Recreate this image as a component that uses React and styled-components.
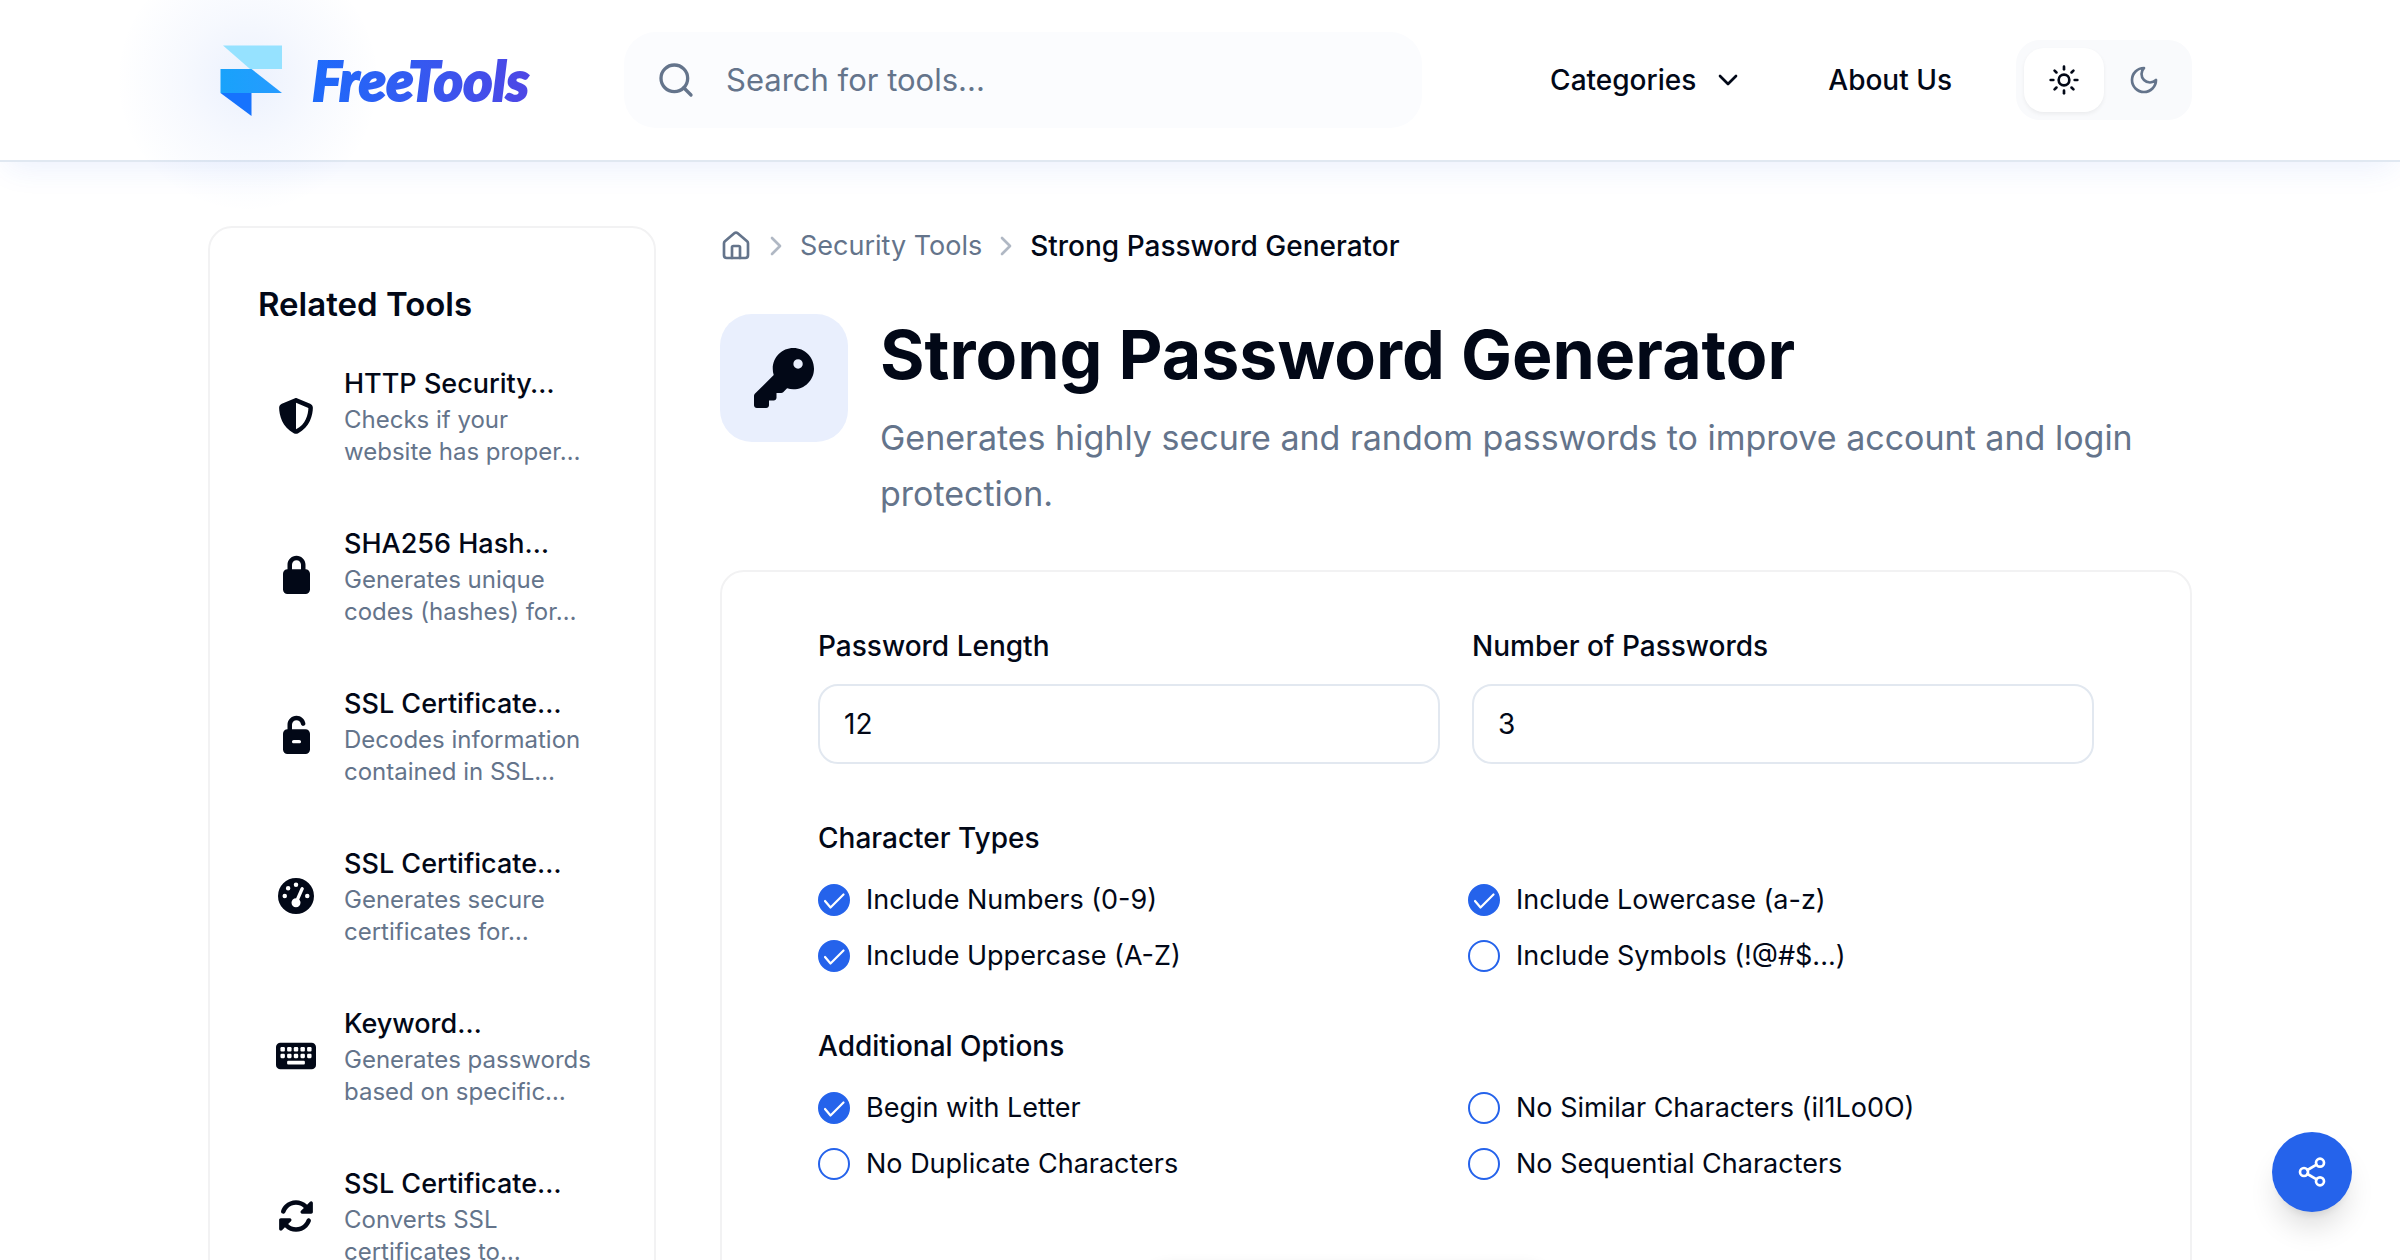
import { useState } from "react";
import styled, { createGlobalStyle } from "styled-components";
import {
  ChevronDown,
  ChevronRight,
  House,
  Search,
  Share2,
  Sun,
} from "lucide-react";
import { FaGaugeHigh, FaKey, FaRotate, FaShieldHalved } from "react-icons/fa6";

const GlobalStyle = createGlobalStyle`
  * {
    box-sizing: border-box;
  }
  body {
    margin: 0;
    background-color: #ffffff;
    color: #020817;
    font-family: Inter, "Liberation Sans", sans-serif;
    font-size: 28px;
    line-height: 40px;
  }
  h1, h2, h3, p {
    margin: 0;
  }
  a {
    color: inherit;
    text-decoration: none;
  }
  button, input {
    font: inherit;
    color: inherit;
  }
  button {
    border: none;
    padding: 0;
    cursor: pointer;
  }
  svg {
    display: block;
    flex-shrink: 0;
  }
`;

const Header = styled.header`
  border-bottom: 2px solid #e0e8f1;
  box-shadow: 0 12px 30px -8px rgba(37, 99, 235, 0.1);
`;

const Container = styled.div`
  width: 100%;
  max-width: 2048px;
  margin: 0 auto;
  padding: 0 32px;
`;

const HeaderRow = styled(Container)`
  display: flex;
  align-items: center;
  height: 160px;
`;

const Logo = styled.a`
  position: relative;
  display: flex;
  align-items: center;
  gap: 16px;
  width: 416px;
  padding-left: 8px;
  &::before {
    content: "";
    position: absolute;
    left: -92px;
    top: -92px;
    width: 264px;
    height: 264px;
    background: radial-gradient(
      closest-side,
      rgba(37, 99, 235, 0.09),
      rgba(37, 99, 235, 0.04) 50%,
      rgba(37, 99, 235, 0)
    );
    pointer-events: none;
  }
`;

const LogoMark = styled.svg`
  position: relative;
  width: 80px;
  height: 80px;
`;

const LogoText = styled.span`
  padding-right: 4px;
  background: linear-gradient(to right, #1d6bfb, #4f46e5);
  background-clip: text;
  color: transparent;
  font-family: Lato, sans-serif;
  font-size: 56px;
  font-weight: 900;
  font-style: italic;
  line-height: 64px;
  -webkit-text-stroke: 2px transparent;
`;

const SearchBox = styled.label`
  display: flex;
  align-items: center;
  gap: 30px;
  flex: 1;
  max-width: 798px;
  height: 96px;
  padding: 0 32px;
  border-radius: 32px;
  background-color: #fbfcfe;
  color: #64748b;
  input {
    flex: 1;
    min-width: 0;
    border: none;
    padding: 0;
    outline: none;
    background: transparent;
    font-size: 31px;
  }
  input::placeholder {
    color: #64748b;
    opacity: 1;
  }
`;

const Nav = styled.nav`
  display: flex;
  align-items: center;
  gap: 84px;
  margin-left: auto;
  font-weight: 500;
`;

const NavButton = styled.button`
  display: flex;
  align-items: center;
  gap: 16px;
  background: none;
  font-weight: 500;
`;

const ThemeToggle = styled.div`
  display: flex;
  margin-left: 64px;
  padding: 8px;
  border-radius: 24px;
  background-color: #f9fafc;
`;

const ThemeButton = styled.button`
  display: flex;
  align-items: center;
  justify-content: center;
  width: 80px;
  height: 64px;
  border-radius: 20px;
  background-color: ${(props) => (props.$active ? "#ffffff" : "transparent")};
  box-shadow: ${(props) =>
    props.$active ? "0 2px 4px rgba(0, 0, 0, 0.06)" : "none"};
  color: ${(props) => (props.$active ? "#020817" : "#64748b")};
`;

const Page = styled(Container)`
  display: flex;
  align-items: flex-start;
  gap: 64px;
  padding-top: 64px;
  padding-bottom: 64px;
`;

const Card = styled.div`
  border: 2px solid #f2f2f3;
  border-radius: 24px;
  background-color: #ffffff;
`;

const Sidebar = styled(Card).attrs({ as: "aside" })`
  flex-shrink: 0;
  width: 448px;
  padding: 48px;
  h2 {
    margin-bottom: 8px;
    font-size: 33px;
    font-weight: 600;
    line-height: 56px;
  }
`;

const ToolList = styled.div`
  display: flex;
  flex-direction: column;
  gap: 8px;
`;

const ToolLink = styled.a`
  display: flex;
  align-items: center;
  gap: 24px;
  padding: 24px 14px;
  border-radius: 16px;
`;

const ToolIcon = styled.span`
  display: flex;
  justify-content: center;
  flex-shrink: 0;
  width: 48px;
  font-size: 36px;
`;

const ToolName = styled.div`
  font-size: 27px;
  font-weight: 500;
`;

const ToolText = styled.div`
  color: #64748b;
  font-size: 24px;
  line-height: 32px;
`;

const Main = styled.main`
  flex: 1;
  min-width: 0;
`;

const Breadcrumb = styled.nav`
  display: flex;
  align-items: center;
  gap: 8px;
  color: #64748b;
  font-size: 27px;
  svg.sep {
    opacity: 0.5;
  }
  strong {
    color: #020817;
    font-size: 28px;
    font-weight: 500;
  }
`;

const Hero = styled.div`
  display: flex;
  align-items: flex-start;
  gap: 32px;
  margin: 48px 0;
  h1 {
    font-size: 68px;
    font-weight: 700;
    line-height: 80px;
  }
  p {
    margin-top: 16px;
    color: #64748b;
    font-size: 34px;
    line-height: 56px;
  }
`;

const HeroIcon = styled.div`
  display: flex;
  align-items: center;
  justify-content: center;
  flex-shrink: 0;
  width: 128px;
  height: 128px;
  border-radius: 32px;
  background-color: #e9effd;
  font-size: 60px;
`;

const FormCard = styled(Card).attrs({ as: "form" })`
  padding: 56px 96px;
`;

const Fields = styled.div`
  display: grid;
  grid-template-columns: 1fr 1fr;
  gap: 32px;
`;

const Field = styled.label`
  display: flex;
  flex-direction: column;
  gap: 20px;
  font-weight: 500;
  line-height: 36px;
  input {
    width: 100%;
    height: 80px;
    padding: 0 24px;
    border: 2px solid #e2e8f0;
    border-radius: 20px;
    background-color: #ffffff;
    font-weight: 400;
  }
`;

const OptionGroup = styled.fieldset`
  margin: 56px 0 0;
  padding: 0;
  border: none;
  legend {
    margin-bottom: 28px;
    padding: 0;
    font-weight: 500;
    line-height: 36px;
  }
`;

const OptionGrid = styled.div`
  display: grid;
  grid-template-columns: 1fr 1fr;
  gap: 24px;
`;

const Option = styled.label`
  display: flex;
  align-items: center;
  gap: 16px;
  font-size: 27px;
  line-height: 32px;
`;

const checkMark =
  "url(\"data:image/svg+xml,%3Csvg xmlns='http://www.w3.org/2000/svg' viewBox='0 0 32 32' fill='none' stroke='white' stroke-width='2.2' stroke-linecap='round' stroke-linejoin='round'%3E%3Cpath d='M7 17l5.5 6.5L25.5 10.5'/%3E%3C/svg%3E\")";

const Checkbox = styled.input.attrs({ type: "checkbox" })`
  appearance: none;
  flex-shrink: 0;
  width: 32px;
  height: 32px;
  margin: 0;
  border: 2px solid #2563eb;
  border-radius: 50%;
  &:checked {
    background: #2563eb ${checkMark} center / 32px no-repeat;
  }
`;

const Actions = styled.div`
  display: flex;
  justify-content: center;
  gap: 16px;
  margin-top: 84px;
`;

const ActionButton = styled.button`
  width: ${(props) => (props.$primary ? "400px" : "200px")};
  height: 88px;
  border-radius: 20px;
  background-color: ${(props) => (props.$primary ? "#2563eb" : "#ffffff")};
  box-shadow: ${(props) =>
    props.$primary
      ? "0 4px 16px rgba(0, 0, 0, 0.12)"
      : "inset 0 0 0 2px #e2e8f0"};
  color: ${(props) => (props.$primary ? "#ffffff" : "#020817")};
  font-weight: 500;
`;

const ShareButton = styled.button`
  position: fixed;
  right: 48px;
  bottom: 48px;
  display: flex;
  align-items: center;
  justify-content: center;
  width: 80px;
  height: 80px;
  border-radius: 50%;
  background-color: #2563eb;
  box-shadow: 0 20px 30px -6px rgba(0, 0, 0, 0.14),
    0 8px 12px -8px rgba(0, 0, 0, 0.14);
  color: #ffffff;
`;

const FlagLogo = () => (
  <LogoMark viewBox="0 0 80 80" aria-hidden="true">
    <defs>
      <linearGradient id="flagMid" x1="0" y1="0" x2="1" y2="0">
        <stop offset="0" stopColor="#18a2fb" />
        <stop offset="1" stopColor="#279bff" />
      </linearGradient>
    </defs>
    <path d="M7 5.5H66V29H34Z" fill="#96e2ff" />
    <path d="M4.5 29H35.5L66 53H4.5Z" fill="url(#flagMid)" />
    <path d="M4.5 53H35.5V76Z" fill="#1673fe" />
  </LogoMark>
);

const Moon = () => (
  <svg
    width="32"
    height="32"
    viewBox="0 0 24 24"
    fill="none"
    stroke="currentColor"
    strokeWidth="2"
    strokeLinecap="round"
    strokeLinejoin="round"
  >
    <path d="M12 3a6 6 0 0 0 9 9 9 9 0 1 1-9-9Z" />
  </svg>
);

const LockIcon = () => (
  <svg
    width="27"
    height="36"
    viewBox="0 0 384 512"
    fill="currentColor"
    overflow="visible"
  >
    <path d="M128 96v64h128V96c0-35.300-28.700-64-64-64s-64 28.700-64 64zM64 160V96C64 25.300 121.300-32 192-32S320 25.300 320 96v64c35.300 0 64 28.700 64 64v224c0 35.300-28.700 64-64 64H64c-35.300 0-64-28.700-64-64V224c0-35.300 28.700-64 64-64z" />
  </svg>
);

const UnlockIcon = () => (
  <svg
    width="27"
    height="36"
    viewBox="0 0 384 512"
    fill="currentColor"
    overflow="visible"
  >
    <path d="M192 32c-35.300 0-64 28.700-64 64v64h192c35.300 0 64 28.700 64 64v224c0 35.300-28.700 64-64 64H64c-35.300 0-64-28.700-64-64V224c0-35.300 28.700-64 64-64V96c0-70.700 57.300-128 128-128 63.500 0 116.100 46.100 126.200 106.700 2.900 17.400-8.800 33.900-26.300 36.900s-33.900-8.800-36.800-26.300C250 55.100 223.700 32 192 32zm40 328c13.300 0 24-10.700 24-24s-10.700-24-24-24h-80c-13.300 0-24 10.700-24 24s10.700 24 24 24z" />
  </svg>
);

const KeyboardIcon = () => (
  <svg width="40" height="36" viewBox="0 0 576 512">
    <rect y="64" width="576" height="384" rx="64" fill="currentColor" />
    {[128, 224].map((y) =>
      [64, 160, 256, 352, 448].map((x) => (
        <rect key={x + y} x={x} y={y} width="64" height="64" rx="16" fill="#fff" />
      ))
    )}
    <rect x="160" y="326" width="256" height="54" rx="16" fill="#fff" />
  </svg>
);

const relatedTools = [
  {
    icon: <FaShieldHalved />,
    name: "HTTP Security…",
    text: "Checks if your website has proper…",
  },
  {
    icon: <LockIcon />,
    name: "SHA256 Hash…",
    text: "Generates unique codes (hashes) for…",
  },
  {
    icon: <UnlockIcon />,
    name: "SSL Certificate…",
    text: "Decodes information contained in SSL…",
  },
  {
    icon: <FaGaugeHigh />,
    name: "SSL Certificate…",
    text: "Generates secure certificates for…",
  },
  {
    icon: <KeyboardIcon />,
    name: "Keyword…",
    text: "Generates passwords based on specific…",
  },
  {
    icon: <FaRotate />,
    name: "SSL Certificate…",
    text: "Converts SSL certificates to…",
  },
];

const optionGroups = [
  {
    title: "Character Types",
    options: [
      ["numbers", "Include Numbers (0-9)"],
      ["lowercase", "Include Lowercase (a-z)"],
      ["uppercase", "Include Uppercase (A-Z)"],
      ["symbols", "Include Symbols (!@#$...)"],
    ],
  },
  {
    title: "Additional Options",
    options: [
      ["beginWithLetter", "Begin with Letter"],
      ["noSimilar", "No Similar Characters (il1Lo0O)"],
      ["noDuplicate", "No Duplicate Characters"],
      ["noSequential", "No Sequential Characters"],
    ],
  },
];

export default function App() {
  const [theme, setTheme] = useState("light");
  const [length, setLength] = useState("12");
  const [count, setCount] = useState("3");
  const [checked, setChecked] = useState({
    numbers: true,
    lowercase: true,
    uppercase: true,
    beginWithLetter: true,
  });

  const toggle = (key) =>
    setChecked((prev) => ({ ...prev, [key]: !prev[key] }));

  return (
    <>
      <GlobalStyle />
      <Header>
        <HeaderRow>
          <Logo href="#">
            <FlagLogo />
            <LogoText>FreeTools</LogoText>
          </Logo>
          <SearchBox>
            <Search size={40} />
            <input
              type="text"
              placeholder="Search for tools..."
              aria-label="Search for tools"
            />
          </SearchBox>
          <Nav>
            <NavButton type="button">
              Categories
              <ChevronDown size={32} />
            </NavButton>
            <a href="#about">About Us</a>
          </Nav>
          <ThemeToggle>
            <ThemeButton
              type="button"
              aria-label="Light theme"
              $active={theme === "light"}
              onClick={() => setTheme("light")}
            >
              <Sun size={32} />
            </ThemeButton>
            <ThemeButton
              type="button"
              aria-label="Dark theme"
              $active={theme === "dark"}
              onClick={() => setTheme("dark")}
            >
              <Moon />
            </ThemeButton>
          </ThemeToggle>
        </HeaderRow>
      </Header>

      <Page>
        <Sidebar>
          <h2>Related Tools</h2>
          <ToolList>
            {relatedTools.map((tool, i) => (
              <ToolLink href="#" key={i}>
                <ToolIcon>{tool.icon}</ToolIcon>
                <div>
                  <ToolName>{tool.name}</ToolName>
                  <ToolText>{tool.text}</ToolText>
                </div>
              </ToolLink>
            ))}
          </ToolList>
        </Sidebar>

        <Main>
          <Breadcrumb aria-label="Breadcrumb">
            <a href="#" aria-label="Home">
              <House size={32} />
            </a>
            <ChevronRight className="sep" size={32} />
            <a href="#security">Security Tools</a>
            <ChevronRight className="sep" size={32} />
            <strong>Strong Password Generator</strong>
          </Breadcrumb>

          <Hero>
            <HeroIcon>
              <FaKey />
            </HeroIcon>
            <div>
              <h1>Strong Password Generator</h1>
              <p>
                Generates highly secure and random passwords to improve account
                and login protection.
              </p>
            </div>
          </Hero>

          <FormCard onSubmit={(e) => e.preventDefault()}>
            <Fields>
              <Field>
                Password Length
                <input
                  inputMode="numeric"
                  value={length}
                  onChange={(e) => setLength(e.target.value)}
                />
              </Field>
              <Field>
                Number of Passwords
                <input
                  inputMode="numeric"
                  value={count}
                  onChange={(e) => setCount(e.target.value)}
                />
              </Field>
            </Fields>
            {optionGroups.map((group) => (
              <OptionGroup key={group.title}>
                <legend>{group.title}</legend>
                <OptionGrid>
                  {group.options.map(([key, label]) => (
                    <Option key={key}>
                      <Checkbox
                        checked={!!checked[key]}
                        onChange={() => toggle(key)}
                      />
                      {label}
                    </Option>
                  ))}
                </OptionGrid>
              </OptionGroup>
            ))}
            <Actions>
              <ActionButton type="submit" $primary>
                Generate
              </ActionButton>
              <ActionButton type="reset">Reset</ActionButton>
            </Actions>
          </FormCard>
        </Main>
      </Page>

      <ShareButton type="button" aria-label="Share">
        <Share2 size={32} />
      </ShareButton>
    </>
  );
}
